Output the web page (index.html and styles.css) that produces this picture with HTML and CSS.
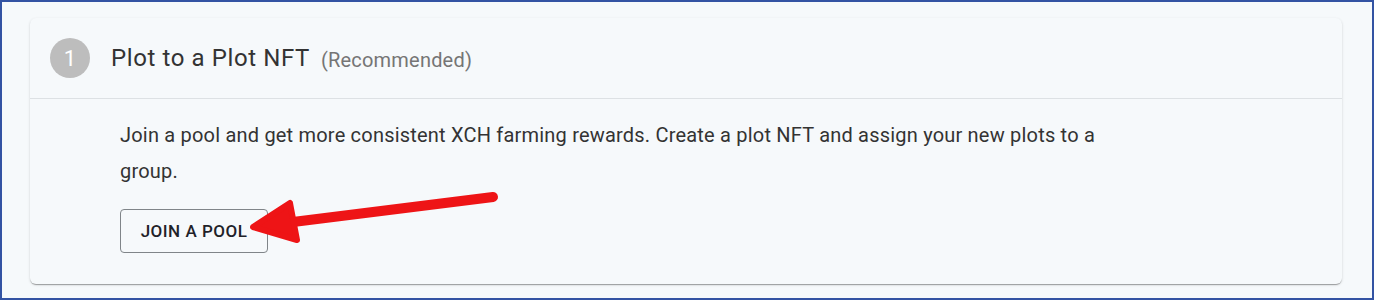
FILE: index.html
```html
<!DOCTYPE html>
<html lang="en">
<head>
  <meta charset="UTF-8">
  <title>Plot to a Plot NFT</title>
  <link rel="stylesheet" href="styles.css">
</head>
<body>
  <div class="frame">
    <div class="step-card">
      <div class="step-header">
        <div class="step-num">1</div>
        <h3 class="step-title">Plot to a Plot NFT</h3>
        <span class="step-note">(Recommended)</span>
      </div>
      <div class="step-body">
        <p>Join a pool and get more consistent XCH farming rewards. Create a plot NFT and assign your new plots to a group.</p>
        <button class="outline-button">Join a Pool</button>
      </div>
    </div>
    <svg class="arrow" width="1374" height="300" viewBox="0 0 1374 300">
      <line x1="493" y1="197" x2="285" y2="223" stroke="#ee1416" stroke-width="10" stroke-linecap="round"/>
      <polygon points="253,227 290,203 297,240" fill="#ee1416" stroke="#ee1416" stroke-width="6" stroke-linejoin="round"/>
    </svg>
  </div>
</body>
</html>
```

FILE: styles.css
```css
body {
  margin: 0;
  font-family: Roboto, "Liberation Sans", sans-serif;
}
.frame {
  position: relative;
  box-sizing: border-box;
  width: 1374px;
  height: 300px;
  border: 2px solid #3353a3;
  background: #f6f9fb;
  padding: 16px 30px 14px 28px;
}
.step-card {
  background: #f6f9fb;
  border-radius: 6px;
  box-shadow: 0 2px 1px -1px rgba(0,0,0,0.2), 0 1px 1px 0 rgba(0,0,0,0.14), 0 1px 3px 0 rgba(0,0,0,0.12);
}
.step-header {
  display: flex;
  align-items: center;
  height: 80px;
  padding-left: 20px;
  border-bottom: 1px solid #dde1e4;
}
.step-num {
  width: 40px;
  height: 40px;
  border-radius: 50%;
  background: #bdbdbd;
  color: #fff;
  font-size: 22px;
  display: flex;
  align-items: center;
  justify-content: center;
  margin-right: 21px;
}
.step-title {
  margin: 0;
  font-size: 24px;
  font-weight: normal;
  letter-spacing: 0.6px;
  color: #333;
}
.step-note {
  margin-left: 11px;
  margin-top: 3px;
  font-size: 20px;
  letter-spacing: 0.2px;
  color: #757575;
}
.step-body {
  padding: 18px 90px 31px;
}
.step-body p {
  margin: 0 0 20px;
  max-width: 1000px;
  font-size: 20px;
  line-height: 36px;
  letter-spacing: 0.2px;
  color: #333;
}
.outline-button {
  display: block;
  width: 148px;
  height: 44px;
  background: transparent;
  border: 1px solid #808589;
  border-radius: 4px;
  font-family: inherit;
  font-size: 17px;
  font-weight: 500;
  text-transform: uppercase;
  letter-spacing: 0.5px;
  color: #1f2229;
  cursor: pointer;
}
.arrow {
  position: absolute;
  top: -2px;
  left: -2px;
}
```
